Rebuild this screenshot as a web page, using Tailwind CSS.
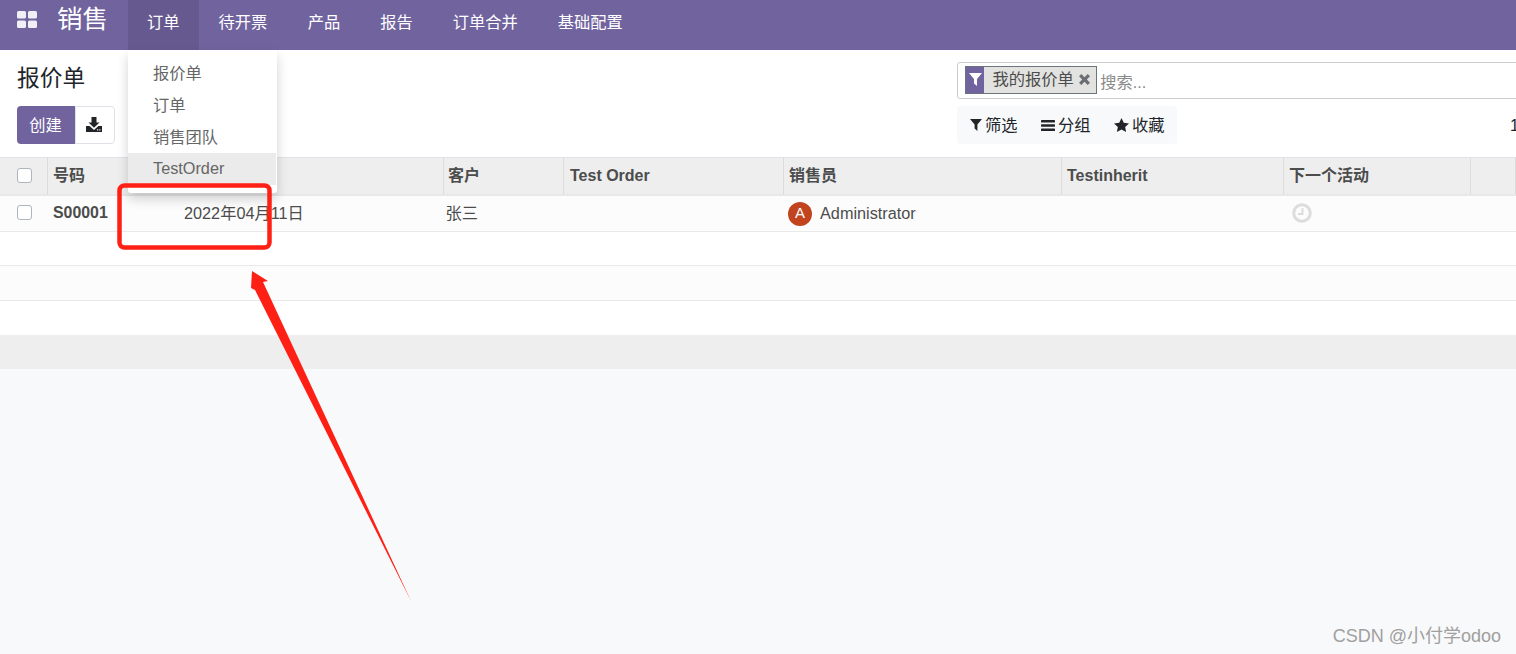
<!doctype html>
<html lang="zh">
<head>
<meta charset="utf-8">
<title>报价单</title>
<script src="https://cdn.jsdelivr.net/npm/@tailwindcss/browser@4"></script>
</head>
<body class="m-0">
<div class="relative w-[1516px] h-[654px] overflow-hidden bg-[#f8f9fa] text-[16.25px] text-[#4c4c4c] font-[family-name:'Liberation_Sans','Noto_Sans_CJK_SC',sans-serif]">

  <!-- top nav -->
  <nav class="flex items-stretch h-[50px] bg-[#71639e] text-white">
    <div class="flex items-center w-[128px] pl-[17px] pb-[4px]">
      <svg width="20" height="17" viewBox="0 0 20 17" class="mt-[-8px]" fill="#f1eff6">
        <rect x="0" y="0" width="9" height="7.5" rx="1.5"/><rect x="11" y="0" width="9" height="7.5" rx="1.5"/>
        <rect x="0" y="9.5" width="9" height="7.5" rx="1.5"/><rect x="11" y="9.5" width="9" height="7.5" rx="1.5"/>
      </svg>
      <span class="ml-[20px] text-[25.5px] leading-none mt-[-7px]">销售</span>
    </div>
    <a class="flex items-center px-[19px] pb-[6px] bg-[#665990]">订单</a>
    <a class="flex items-center px-[20px] pb-[6px]">待开票</a>
    <a class="flex items-center pl-[20.5px] pr-[20px] pb-[6px]">产品</a>
    <a class="flex items-center px-[20px] pb-[6px]">报告</a>
    <a class="flex items-center pl-[20px] pr-[20px] pb-[6px]">订单合并</a>
    <a class="flex items-center px-[20px] pb-[6px]">基础配置</a>
  </nav>

  <!-- control panel -->
  <section class="flex h-[107px] bg-white">
    <div class="w-[957px] pl-[17px] shrink-0">
      <h1 class="text-[22.75px] leading-[30px] mt-[13px] text-[#212529]">报价单</h1>
      <div class="flex mt-[13px] h-[38px]">
        <button class="w-[58px] pt-[1px] pr-[1px] bg-[#71639e] text-white rounded-l-[4px] text-[16.25px]">创建</button>
        <button class="flex items-center justify-center w-[40px] pr-[2px] pb-[1px] bg-white border border-[#dee2e6] rounded-r-[4px]">
          <svg width="16" height="15" viewBox="0 0 16 15" fill="#212529"><path d="M5.5 0h5v5.5h3L8 10.8 2.5 5.5h3z"/><path d="M0 9h3.6L8 13l4.4-4H16v6H0z"/><rect x="11" y="12.3" width="1.2" height="1.2" fill="#fff"/><rect x="13.2" y="12.3" width="1.2" height="1.2" fill="#fff"/></svg>
        </button>
      </div>
    </div>
    <div class="w-[590px] shrink-0">
      <div class="flex items-center gap-[3px] h-[37px] mt-[12px] pl-[7px] border border-[#ccc] rounded-[3px]">
        <div class="flex h-[28px] border border-[#6c757d] bg-[#e2e2e0] mt-[-2px]">
          <span class="flex items-center justify-center w-[18px] bg-[#71639e]">
            <svg width="13" height="13" viewBox="0 0 12 12" fill="#fff"><path d="M0 0h12L7.4 5.6V12L4.6 9.6v-4z"/></svg>
          </span>
          <span class="ml-[8.5px] leading-[24px] text-[#4c4c4c]">我的报价单</span>
          <span class="flex items-center ml-[5px] mr-[6.5px]">
            <svg width="11" height="11" viewBox="0 0 11 11" fill="#6b6f73"><path d="M2.3 0 5.5 3.2 8.7 0 11 2.3 7.8 5.5 11 8.7 8.7 11 5.5 7.8 2.3 11 0 8.7 3.2 5.5 0 2.3z"/></svg>
          </span>
        </div>
        <span class="pt-[3px] text-[#8a8a8a]">搜索...</span>
      </div>
      <div class="flex justify-between mt-[7px]">
        <div class="flex items-center h-[38px] w-[220px] pl-[13px] bg-[#f8f9fa] rounded-[4px] text-[#212529]">
          <svg width="12" height="12" viewBox="0 0 12 12" fill="#212529"><path d="M0 0h12L7.4 5.6V12L4.6 9.6v-4z"/></svg>
          <span class="ml-[3px]">筛选</span>
          <svg class="ml-[23.5px]" width="14" height="11" viewBox="0 0 14 11" fill="#212529"><rect width="14" height="2.4" rx=".6"/><rect y="4.3" width="14" height="2.4" rx=".6"/><rect y="8.6" width="14" height="2.4" rx=".6"/></svg>
          <span class="ml-[3px]">分组</span>
          <svg class="ml-[23.5px]" width="15" height="14" viewBox="0 0 14 13" fill="#212529"><path d="M7 0l2.1 4.4 4.9.6-3.6 3.3.9 4.7L7 10.7 2.7 13l.9-4.7L0 5l4.9-.6z"/></svg>
          <span class="ml-[3px]">收藏</span>
        </div>
        <span class="mr-[28px] leading-[38px] text-[#212529]">1</span>
      </div>
    </div>
  </section>

  <!-- list -->
  <div class="grid grid-cols-[47px_396px_120px_220px_278px_222px_187px_46px] h-[39px] bg-[#eeeeee] border-t border-[#dfe3e8] border-b-2 border-b-[#e6e8ea] text-[16px] font-bold leading-[35px]">
    <div class="flex items-center pl-[17px] pb-[2px]"><span class="block w-[15px] h-[15px] rounded-[3px] border border-[#adb5bd] bg-white"></span></div>
    <div class="pl-[5px] border-l border-[#dcdcdc]">号码</div>
    <div class="pl-[4px] border-l border-[#dcdcdc]">客户</div>
    <div class="pl-[6px] border-l border-[#dcdcdc]">Test Order</div>
    <div class="pl-[5px] border-l border-[#dcdcdc]">销售员</div>
    <div class="pl-[5px] border-l border-[#dcdcdc]">Testinherit</div>
    <div class="pl-[5px] border-l border-[#dcdcdc]">下一个活动</div>
    <div class="border-x border-[#dcdcdc]"></div>
  </div>
  <div class="grid grid-cols-[47px_396px_120px_220px_278px_222px_187px_46px] items-center h-[36px] bg-[#fcfcfc] border-b border-[#e9e9e9]">
    <div class="flex items-center pl-[17px] pb-[2px]"><span class="block w-[15px] h-[15px] rounded-[3px] border border-[#adb5bd] bg-white"></span></div>
    <div class="flex pl-[6px]"><b class="w-[131px] text-[15.9px]">S00001</b><span>2022年04月11日</span></div>
    <div class="pl-[2.5px]">张三</div>
    <div></div>
    <div class="flex items-center pl-[5px]">
      <span class="flex items-center justify-center w-[24px] h-[24px] rounded-full bg-[#c2441f] text-white text-[15px]">A</span>
      <span class="ml-[8px]">Administrator</span>
    </div>
    <div></div>
    <div class="pl-[9px] flex items-center pb-[1px]">
      <svg width="20" height="20" viewBox="0 0 20 20" fill="none" stroke="#dddddd"><circle cx="10" cy="10" r="8.3" stroke-width="3"/><path d="M10.5 5v6H6" stroke-width="2"/></svg>
    </div>
    <div></div>
  </div>
  <div class="h-[34px] bg-white border-b border-[#e9e9e9]"></div>
  <div class="h-[35px] bg-[#fcfcfc] border-b border-[#e9e9e9]"></div>
  <div class="h-[34px] bg-white"></div>
  <div class="h-[34px] bg-[#eeeeee]"></div>

  <!-- open dropdown -->
  <div class="absolute left-[128px] top-[50px] w-[149px] h-[143px] pt-[7px] pr-[1px] bg-white shadow-[0_6px_12px_rgba(0,0,0,0.175)] rounded-b-[3px] text-[#666666]">
    <div class="h-[32px] pl-[25px] leading-[32px]">报价单</div>
    <div class="h-[32px] pl-[25px] leading-[32px]">订单</div>
    <div class="h-[32px] pl-[25px] leading-[32px]">销售团队</div>
    <div class="h-[32px] pl-[25px] leading-[30px] bg-[#ebebeb]">TestOrder</div>
  </div>

  <!-- red annotation -->
  <svg class="absolute left-0 top-0 pointer-events-none" width="1516" height="654" viewBox="0 0 1516 654" fill="none">
    <rect x="119.5" y="185.5" width="150" height="62" rx="5" stroke="#ff2015" stroke-width="4.5"/>
    <path d="M252 271 268 281 263 282 411 601 255 290 251 288z" fill="#ff2015"/>
  </svg>

  <!-- watermark -->
  <div class="absolute right-[15px] top-[625px] text-[18px] leading-[22px] text-[#a0a0a0]">CSDN @小付学odoo</div>
</div>
</body>
</html>
